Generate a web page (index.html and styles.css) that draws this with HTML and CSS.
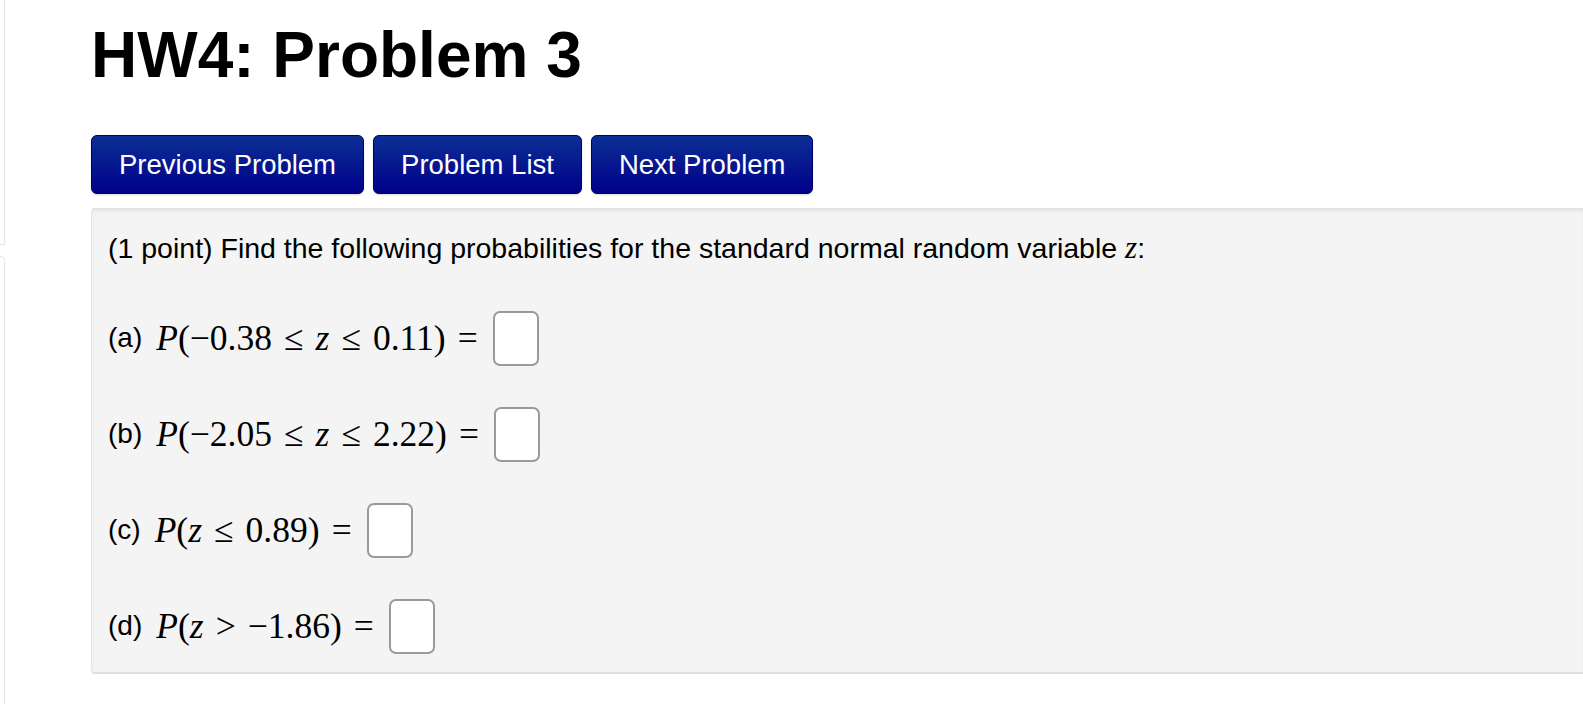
FILE: index.html
```html
<!DOCTYPE html>
<html lang="en">
  <head>
    <meta charset="UTF-8" />
    <meta name="viewport" content="width=device-width, initial-scale=1.0" />
    <link rel="stylesheet" href="styles.css">
    <title>HW4: Problem 3</title>
  </head>
  <body>
    <div class="page">
      <div class="sidebar">
        <div class="sideTop"></div>
        <div class="sideBottom"></div>
      </div>

      <div class="main">
        <h1>HW4: Problem 3</h1>

        <div class="navButtons">
          <button type="button" class="navBtn">Previous Problem</button>
          <button type="button" class="navBtn">Problem List</button>
          <button type="button" class="navBtn">Next Problem</button>
        </div>

        <div class="problem">
          <p class="intro">(1 point) Find the following probabilities for the standard normal random variable <span class="math"><i>z</i></span>:</p>

          <div class="part">
            <span class="label">(a)</span>
            <span class="math"><i>P</i>(−0.38<span class="rel">≤</span><i>z</i><span class="rel">≤</span>0.11)<span class="rel">=</span></span>
            <input type="text" class="answer" />
          </div>

          <div class="part">
            <span class="label">(b)</span>
            <span class="math"><i>P</i>(−2.05<span class="rel">≤</span><i>z</i><span class="rel">≤</span>2.22)<span class="rel">=</span></span>
            <input type="text" class="answer" />
          </div>

          <div class="part">
            <span class="label">(c)</span>
            <span class="math"><i>P</i>(<i>z</i><span class="rel">≤</span>0.89)<span class="rel">=</span></span>
            <input type="text" class="answer" />
          </div>

          <div class="part">
            <span class="label">(d)</span>
            <span class="math"><i>P</i>(<i>z</i><span class="rel">&gt;</span>−1.86)<span class="rel">=</span></span>
            <input type="text" class="answer" />
          </div>
        </div>
      </div>
    </div>
  </body>
</html>
```

FILE: styles.css
```css
body {
  margin: 0;
  font-family: "Liberation Sans", Arial, sans-serif;
  color: #000;
  background-color: #fff;
  overflow: hidden;
}

.page {
  display: flex;
}

.sidebar {
  width: 5px;
  flex-shrink: 0;
}

.sideTop {
  height: 244px;
  border-right: 1px solid #e6e6e6;
  border-bottom: 1px solid #e6e6e6;
}

.sideBottom {
  height: 460px;
  margin-top: 11px;
  border-right: 1px solid #e6e6e6;
  border-top: 1px solid #e6e6e6;
  border-top-right-radius: 6px;
}

.main {
  flex: 1;
  padding: 18px 0 0 86px;
}

h1 {
  margin: 0;
  font-size: 64px;
  line-height: 74px;
  font-weight: bold;
}

.navButtons {
  display: flex;
  gap: 9px;
  margin-top: 43px;
}

.navBtn {
  font-family: "Liberation Sans", Arial, sans-serif;
  font-size: 27.5px;
  line-height: 31px;
  padding: 13px 27px;
  color: #fff;
  border: 1px solid #00006e;
  border-radius: 6px;
  background-color: #00008b;
  background-image: linear-gradient(to bottom, #0c2f94, #00008a);
  box-shadow: 0 1px 2px rgba(0, 0, 0, 0.15);
  cursor: pointer;
}

.problem {
  margin-top: 14px;
  padding: 18px 16px 18px 16px;
  background-color: #f4f4f4;
  border: 1px solid #e4e4e4;
  border-top: 2px solid #e2e2e2;
  border-bottom: 2px solid #dedede;
  border-right: none;
  border-radius: 4px 0 0 4px;
  box-shadow: inset 0 2px 3px rgba(0, 0, 0, 0.04);
}

.intro {
  margin: 0 0 42px 0;
  font-size: 28.5px;
  line-height: 39px;
}

.part {
  display: flex;
  align-items: center;
  height: 56px;
  margin-bottom: 40px;
}

.part:last-child {
  margin-bottom: 0;
}

.label {
  font-size: 28px;
  margin-right: 14px;
}

.math {
  font-family: "Liberation Serif", "Times New Roman", serif;
  font-size: 35.5px;
  white-space: nowrap;
}

.math i {
  font-style: italic;
}

.rel {
  margin: 0 0.34em;
}

.intro .math {
  font-size: 31px;
}

.answer {
  width: 46px;
  height: 55px;
  box-sizing: border-box;
  margin: 0 0 0 3px;
  border: 2px solid #9a9a9a;
  border-radius: 7px;
  background-color: #fff;
}
```
